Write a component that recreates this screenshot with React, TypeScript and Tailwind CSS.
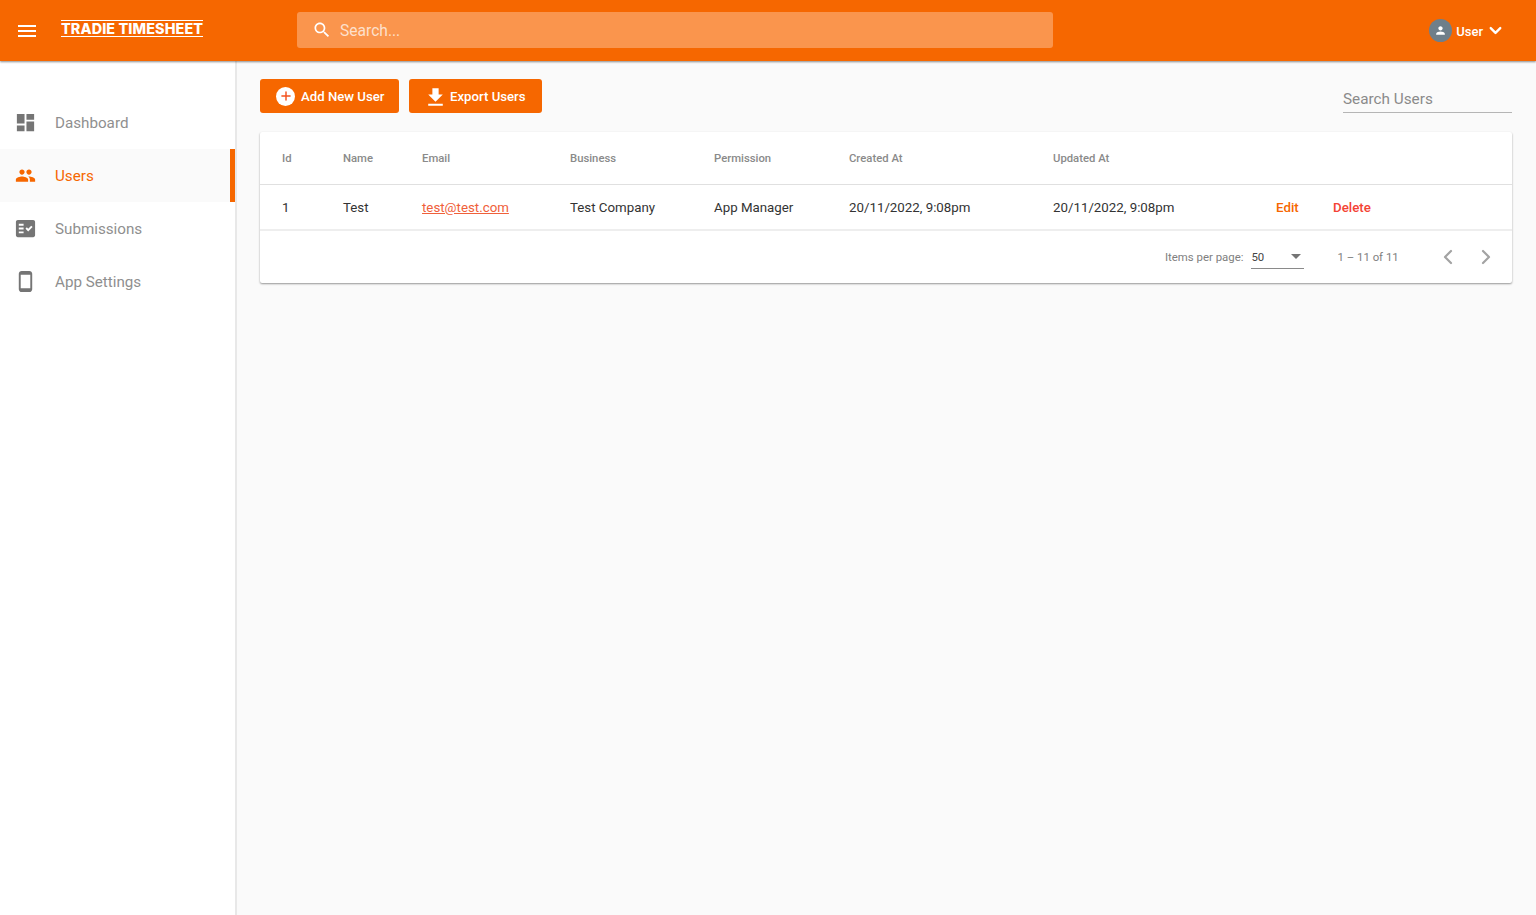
import { ChevronDown, ChevronLeft, ChevronRight, Plus } from "lucide-react";

const columns = [
  { label: "Id", value: "1", width: "w-[61px]" },
  { label: "Name", value: "Test", width: "w-[79px]" },
  { label: "Email", value: "test@test.com", width: "w-[148px]" },
  { label: "Business", value: "Test Company", width: "w-[144px]" },
  { label: "Permission", value: "App Manager", width: "w-[135px]" },
  { label: "Created At", value: "20/11/2022, 9:08pm", width: "w-[204px]" },
  { label: "Updated At", value: "20/11/2022, 9:08pm", width: "w-[223px]" },
];

function DashboardIcon() {
  return (
    <svg width="23" height="23" viewBox="0 0 24 24" fill="#757575">
      <path d="M3 13h8V3H3v10zm0 8h8v-6H3v6zm10 0h8V11h-8v10zm0-18v6h8V3h-8z" />
    </svg>
  );
}

function UsersIcon() {
  return (
    <svg className="ml-px" width="21" height="21" viewBox="0 0 24 24" fill="#f66700">
      <path d="M16 11c1.66 0 2.99-1.34 2.99-3S17.66 5 16 5s-3 1.34-3 3 1.34 3 3 3zm-8 0c1.66 0 2.99-1.34 2.99-3S9.66 5 8 5 5 6.34 5 8s1.34 3 3 3zm0 2c-2.33 0-7 1.17-7 3.5V19h14v-2.5C15 14.17 10.33 13 8 13zm8 0c-.29 0-.62.02-.97.05 1.16.84 1.97 1.97 1.97 3.45V19h6v-2.5c0-2.33-4.67-3.5-7-3.5z" />
    </svg>
  );
}

function SubmissionsIcon() {
  return (
    <svg width="23" height="23" viewBox="0 0 24 24" fill="#757575">
      <path
        fillRule="evenodd"
        clipRule="evenodd"
        d="M20 3H4c-1.1 0-2 .9-2 2v14c0 1.1.9 2 2 2h16c1.1 0 2-.9 2-2V5c0-1.1-.9-2-2-2zM10 17H5v-2h5v2zm0-4H5v-2h5v2zm0-4H5V7h5v2zm4.82 6L12 12.16l1.41-1.41 1.41 1.42L17.99 9l1.42 1.42L14.82 15z"
      />
    </svg>
  );
}

function PhoneIcon() {
  return (
    <svg width="23" height="23" viewBox="0 0 24 24" fill="#757575">
      <path d="M16 1H8C6.34 1 5 2.34 5 4v16c0 1.66 1.34 3 3 3h8c1.66 0 3-1.34 3-3V4c0-1.66-1.34-3-3-3zm1 18H7V5h10v14z" />
    </svg>
  );
}

function NavItem({ icon, label, active }: { icon: React.ReactNode; label: string; active?: boolean }) {
  return (
    <div
      className={`flex h-[53px] items-center pl-[14px] ${
        active ? "border-r-[5px] border-[#f66700] bg-[#fafafa] text-[#f66700]" : "text-[#8f8f8f]"
      }`}
    >
      <span className="flex w-[41px] shrink-0">{icon}</span>
      <span className="mt-[2px] text-[15.2px]">{label}</span>
    </div>
  );
}

export default function App() {
  return (
    <div className="flex h-[915px] flex-col overflow-hidden bg-[#fafafa] font-['Roboto',sans-serif]">
      <header className="relative z-10 flex h-[61px] shrink-0 items-center bg-[#f66700] shadow-[0_1px_2px_rgba(0,0,0,0.45)]">
        <div className="flex w-[297px] shrink-0 items-center">
          <svg className="ml-[15px]" width="24" height="24" viewBox="0 0 24 24" fill="white">
            <path d="M3 18h18v-2H3v2zm0-5h18v-2H3v2zm0-7v2h18V6H3z" />
          </svg>
          <span className="mb-[4px] ml-[22px] border-y-[1.5px] border-white text-[14.4px] leading-[15px] font-extrabold tracking-[0.1px] text-white font-['Inter',sans-serif]">
            TRADIE TIMESHEET
          </span>
        </div>
        <div className="mb-[1px] flex h-9 w-[756px] items-center rounded-[3px] bg-[#fa954d] pl-[15px]">
          <svg width="20" height="20" viewBox="0 0 24 24" fill="white">
            <path d="M15.5 14h-.79l-.28-.27C15.41 12.59 16 11.11 16 9.5 16 5.91 13.09 3 9.5 3S3 5.91 3 9.5 5.91 16 9.5 16c1.61 0 3.09-.59 4.23-1.57l.27.28v.79l5 4.99L20.49 19l-4.99-5zm-6 0C7.01 14 5 11.99 5 9.5S7.01 5 9.5 5 14 7.01 14 9.5 11.99 14 9.5 14z" />
          </svg>
          <span className="mt-[4px] ml-[8px] text-[15.6px] text-[#fde0cc]">Search...</span>
        </div>
        <div className="ml-auto mr-[31px] flex items-center">
          <span className="flex h-[23px] w-[23px] items-center justify-center rounded-full bg-[#6f7f8a]">
            <svg width="13" height="13" viewBox="0 0 24 24" fill="white">
              <path d="M12 12c2.21 0 4-1.79 4-4s-1.79-4-4-4-4 1.79-4 4 1.79 4 4 4zm0 2c-2.67 0-8 1.34-8 4v2h16v-2c0-2.66-5.33-4-8-4z" />
            </svg>
          </span>
          <span className="mt-[2px] ml-[4px] text-[13px] font-medium text-white">User</span>
          <ChevronDown className="ml-[3px] text-white" size={19} strokeWidth={3} />
        </div>
      </header>

      <div className="flex flex-1">
        <aside className="w-[237px] shrink-0 border-r-2 border-[#e8e8e8] bg-white pt-[35px]">
          <NavItem icon={<DashboardIcon />} label="Dashboard" />
          <NavItem icon={<UsersIcon />} label="Users" active />
          <NavItem icon={<SubmissionsIcon />} label="Submissions" />
          <NavItem icon={<PhoneIcon />} label="App Settings" />
        </aside>

        <main className="flex-1 pt-[18px] pr-6 pl-[23px]">
          <div className="flex items-start">
            <button className="flex h-[34px] w-[139px] items-center rounded-[3px] bg-[#f66700] pl-[16px] text-[13.2px] font-medium text-white">
              <span className="flex h-[19px] w-[19px] items-center justify-center rounded-full bg-white">
                <Plus className="text-[#f4511e]" size={14} strokeWidth={2.5} />
              </span>
              <span className="mt-[2px] ml-[6px]">Add New User</span>
            </button>
            <button className="ml-[10px] flex h-[34px] w-[133px] items-center rounded-[3px] bg-[#f66700] pl-[14px] text-[13.2px] font-medium text-white">
              <svg className="mt-[2px]" width="25" height="25" viewBox="0 0 24 24" fill="white">
                <path d="M19 9h-4V3H9v6H5l7 7 7-7zM5 18v2h14v-2H5z" />
              </svg>
              <span className="mt-[2px] ml-[2px]">Export Users</span>
            </button>
            <div className="ml-auto mt-[1px] flex h-[33px] w-[169px] items-end border-b border-[#b5b5b5] pb-[3px] text-[15.3px] leading-5 text-[#8a8a8a]">
              Search Users
            </div>
          </div>

          <div className="mt-[19px] rounded-[2px] bg-white shadow-[0_1px_2px_rgba(0,0,0,0.4)]">
            <div className="flex h-[53px] items-center border-b border-[#e0e0e0] pt-[2px] pl-[22px] text-[11.3px] font-medium text-[#8a8a8a]">
              {columns.map((c) => (
                <div key={c.label} className={c.width}>
                  {c.label}
                </div>
              ))}
            </div>
            <div className="flex h-[46px] items-center border-b-2 border-[#eeeeee] pt-[2px] pl-[22px] text-[13.3px] text-[#333333]">
              {columns.map((c) => (
                <div key={c.label} className={c.width}>
                  {c.label === "Email" ? <span className="text-[#f0603a] underline">{c.value}</span> : c.value}
                </div>
              ))}
              <div className="w-[57px] font-medium text-[#f66700]">Edit</div>
              <div className="font-medium text-[#f44336]">Delete</div>
            </div>
            <div className="flex h-[52px] items-center text-[11.4px] text-[#808080]">
              <span className="mt-[2px] ml-[905px]">Items per page:</span>
              <div className="ml-[8px] flex h-[24px] w-[53px] items-center justify-between border-b border-[#8a8a8a] pr-[3px] text-[#444444]">
                <span className="mt-[2px]">50</span>
                <span className="h-0 w-0 border-x-[5px] border-t-[5px] border-x-transparent border-t-[#757575]" />
              </div>
              <span className="mt-[2px] ml-[33px]">1 – 11 of 11</span>
              <ChevronLeft className="ml-[37px] text-[#a3a3a3]" size={24} strokeWidth={2.2} />
              <ChevronRight className="ml-[14px] text-[#a3a3a3]" size={24} strokeWidth={2.2} />
            </div>
          </div>
        </main>
      </div>
    </div>
  );
}
